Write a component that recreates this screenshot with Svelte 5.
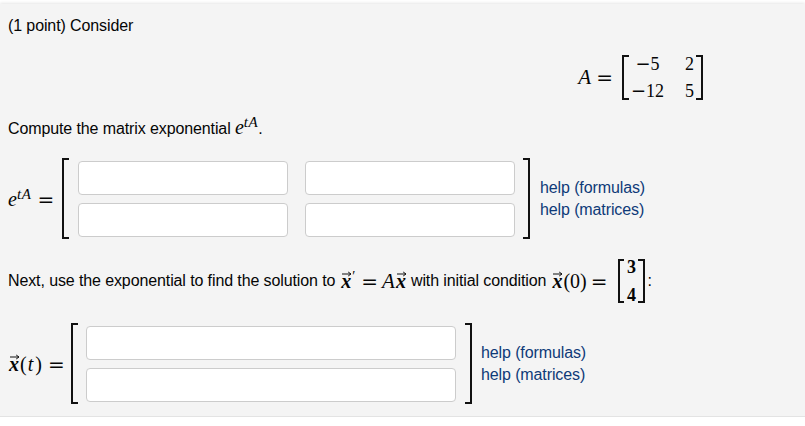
<script>
  const helpLinks = ['help (formulas)', 'help (matrices)'];
</script>

{#snippet help()}
  <div class="help">
    {#each helpLinks as h}<a href="#top">{h}</a>{/each}
  </div>
{/snippet}

{#snippet vecx()}
  <span class="vec"><b>x</b><svg viewBox="0 0 12 6" width="12" height="6"><path d="M2 3H11M8.2 1L11 3L8.2 5" fill="none" stroke="#111" stroke-width="1"/></svg></span>
{/snippet}

<div class="panel">
  <p class="l1">(1 point) Consider</p>

  <div class="display">
    <span class="m"><i class="cap">A</i><span class="eq">=</span></span>
    <span class="br left"></span>
    <span class="mat">
      <span><span class="minus">−</span>5</span><span>2</span>
      <span><span class="minus">−</span>12</span><span>5</span>
    </span>
    <span class="br right"></span>
  </div>

  <p class="l2">Compute the matrix exponential <span class="m"><i>e</i><sup><i>tA</i></sup></span>.</p>

  <div class="row r1">
    <span class="m label"><i>e</i><sup><i>tA</i></sup><span class="eq">=</span></span>
    <span class="br left tall"></span>
    <div class="grid g1">
      <input aria-label="a" /><input aria-label="b" />
      <input aria-label="c" /><input aria-label="d" />
    </div>
    <span class="br right tall"></span>
    {@render help()}
  </div>

  <div class="next">
    <span>Next, use the exponential to find the solution to</span>
    <span class="m s1">{@render vecx()}<span class="prime">′</span><span class="eq">=</span><i class="cap">A</i>{@render vecx()}</span>
    <span class="s2">with initial condition</span>
    <span class="m s3">{@render vecx()}(0)<span class="eq">=</span></span>
    <span class="br left small"></span>
    <span class="col"><span>3</span><span>4</span></span>
    <span class="br right small"></span>
    <span class="colon">:</span>
  </div>

  <div class="row r2">
    <span class="m label">{@render vecx()}(<i class="t">t</i>)<span class="eq">=</span></span>
    <span class="br left tall"></span>
    <div class="grid g2">
      <input aria-label="e" />
      <input aria-label="f" />
    </div>
    <span class="br right tall"></span>
    {@render help()}
  </div>
</div>

<style>
  :global(body) { margin: 0; background: #fff; }
  .panel {
    margin-top: 4px;
    height: 413px;
    box-sizing: border-box;
    background: #f4f4f4;
    border-bottom: 1px solid #e3e3e3;
    box-shadow: 0 -1px 3px #e6e6e6;
    padding: 0 8px;
    font: 16px/20px "Liberation Sans", Arial, sans-serif;
    letter-spacing: -0.11px;
    color: #050505;
    overflow: hidden;
  }
  p { margin: 0; }
  .l1 { padding-top: 12px; }
  .display {
    display: flex;
    justify-content: flex-end;
    align-items: center;
    height: 46px;
    margin: 18px 94px 0 0;
  }
  .m { font-family: "Liberation Serif", "Times New Roman", serif; font-size: 20px; white-space: nowrap; letter-spacing: 0; }
  .cap { font-size: 21px; }
  .eq { margin: 0 8px 0 6px; font: 20px/20px "DejaVu Sans", sans-serif; }
  .display .eq { margin: 0 9px 0 5px; }
  .minus { font: 18px/20px "DejaVu Sans", sans-serif; margin-left: -2px; }
  sup { font-size: 15px; line-height: 0; vertical-align: 7px; letter-spacing: 0.6px; }
  .br { display: inline-block; box-sizing: border-box; width: 7px; border: 2px solid #111; height: 45px; flex: none; }
  .br.left { border-right: 0; }
  .br.right { border-left: 0; }
  .mat {
    display: grid;
    grid-template-columns: auto auto;
    column-gap: 21px;
    row-gap: 5px;
    padding: 0 2px 0 4px;
    text-align: center;
    font: 18px/22px "Liberation Serif", "Times New Roman", serif;
    letter-spacing: 0;
  }
  .l2 { margin-top: 19px; height: 20px; }
  .l2 .m { line-height: 0; }
  .row { display: flex; align-items: center; height: 82px; }
  .r1 { margin-top: 19px; }
  .label { width: 54px; flex: none; }
  .tall { height: 81px; align-self: flex-start; }
  .grid { display: grid; gap: 8px 17px; margin: 0 8px 0 9px; }
  .g1 { grid-template-columns: 210px 210px; }
  input {
    box-sizing: border-box;
    height: 34px;
    width: 100%;
    border: 1px solid #ccc;
    border-radius: 4px;
    background: #fff;
    padding: 0;
    margin: 0;
    display: block;
  }
  .help { display: flex; flex-direction: column; margin-left: 10px; line-height: 22px; }
  a { color: #0e3a78; text-decoration: none; }
  .next { display: flex; align-items: center; height: 62px; margin-top: 10px; white-space: nowrap; }
  .s1 { margin-left: 5px; }
  .s1 .eq { margin: 0 4px 0 5px; }
  .s2 { margin-left: 4px; }
  .s3 { margin-left: 5px; }
  .s3 .eq { margin: 0 11px 0 4px; }
  .vec { position: relative; display: inline-block; width: 12px; text-align: center; font-style: italic; }
  .vec svg { position: absolute; left: 0; top: 0; }
  .prime { font-size: 14px; vertical-align: 7px; line-height: 0; margin-right: 1px; }
  .t { margin: 0 2px 0 1px; }
  .small { height: 44px; }
  .left.small { width: 6px; }
  .col { display: flex; flex-direction: column; align-items: center; width: 14px; font: bold 18px/28px "Liberation Serif", serif; letter-spacing: 0; }
  .colon { margin-left: 2px; }
  .r2 { margin-top: 11px; }
  .r2 .label { width: 63px; }
  .g2 { grid-template-columns: 370px; margin: 0 9px 0 8px; }
  .r2 .help { margin-left: 9px; }
</style>
